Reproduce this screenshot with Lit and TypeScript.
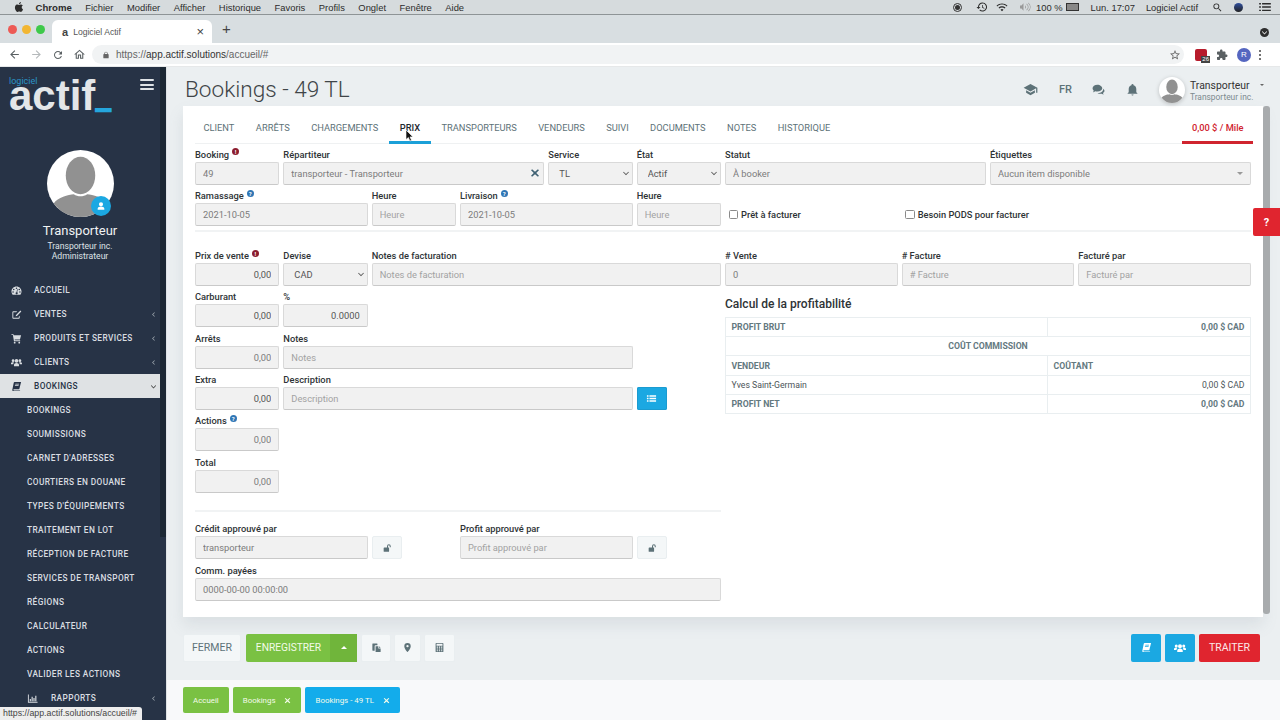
import { LitElement, html, css, svg } from 'lit';
import { customElement } from 'lit/decorators.js';

// all icons share a 24x24 box
const paths: Record<string, string> = {
  apple: 'M18.71 19.5c-.83 1.24-1.71 2.45-3.05 2.47-1.34.03-1.77-.79-3.29-.79-1.53 0-2 .77-3.27.82-1.31.05-2.3-1.32-3.14-2.53C4.25 17 2.94 12.45 4.7 9.39c.87-1.52 2.43-2.48 4.12-2.51 1.28-.02 2.5.87 3.29.87.78 0 2.26-1.07 3.81-.91.65.03 2.47.26 3.64 1.98-.09.06-2.17 1.28-2.15 3.81.03 3.02 2.65 4.03 2.68 4.04-.03.07-.42 1.44-1.38 2.83M13 3.5c.73-.83 1.94-1.46 2.94-1.5.13 1.17-.34 2.35-1.04 3.19-.69.85-1.83 1.51-2.95 1.42-.15-1.15.41-2.35 1.05-3.11z',
  back: 'M20 11H7.83l5.59-5.59L12 4l-8 8 8 8 1.41-1.41L7.83 13H20v-2z',
  forward: 'M12 4l-1.41 1.41L16.17 11H4v2h12.17l-5.58 5.59L12 20l8-8z',
  reload: 'M17.65 6.35C16.2 4.9 14.21 4 12 4c-4.42 0-7.99 3.58-7.99 8s3.57 8 7.99 8c3.73 0 6.84-2.55 7.73-6h-2.08c-.82 2.33-3.04 4-5.65 4-3.31 0-6-2.69-6-6s2.69-6 6-6c1.66 0 3.14.69 4.22 1.78L13 11h7V4l-2.35 2.35z',
  home: 'M12 5.69l5 4.5V18h-2v-6H9v6H7v-7.81l5-4.5M12 3L2 12h3v8h6v-6h2v6h6v-8h3L12 3z',
  star: 'M22 9.24l-7.19-.62L12 2 9.19 8.63 2 9.24l5.46 4.73L5.82 21 12 17.27 18.18 21l-1.63-7.03L22 9.24zM12 15.4l-3.76 2.27 1-4.28-3.32-2.88 4.38-.38L12 6.1l1.71 4.04 4.38.38-3.32 2.88 1 4.28L12 15.4z',
  puzzle: 'M20.5 11H19V7c0-1.1-.9-2-2-2h-4V3.5C13 2.12 11.88 1 10.5 1S8 2.12 8 3.5V5H4c-1.1 0-1.99.9-1.99 2v3.8H3.5c1.49 0 2.7 1.21 2.7 2.7s-1.21 2.7-2.7 2.7H2V20c0 1.1.9 2 2 2h3.8v-1.5c0-1.49 1.21-2.7 2.7-2.7 1.49 0 2.7 1.21 2.7 2.7V22H17c1.1 0 2-.9 2-2v-4h1.5c1.38 0 2.5-1.12 2.5-2.5S21.88 11 20.5 11z',
  lock: 'M18 9h-1V7a5 5 0 0 0-10 0v2H6a2 2 0 0 0-2 2v9a2 2 0 0 0 2 2h12a2 2 0 0 0 2-2v-9a2 2 0 0 0-2-2zM9 7a3 3 0 0 1 6 0v2H9V7z',
  bell: 'M21,19V20H3V19L5,17V11C5,7.9 7.03,5.17 10,4.29C10,4.19 10,4.1 10,4A2,2 0 0,1 12,2A2,2 0 0,1 14,4C14,4.1 14,4.19 14,4.29C16.97,5.17 19,7.9 19,11V17L21,19M14,21A2,2 0 0,1 12,23A2,2 0 0,1 10,21',
  school: 'M12,3L1,9L12,15L21,10.09V17H23V9M5,13.18V17.18L12,21L19,17.18V13.18L12,17L5,13.18Z',
  comments: 'M10 3C5 3 1 6 1 9.7c0 1.7.8 3.2 2.2 4.4-.3 1.2-1 2.2-1.9 3 1.8-.1 3.4-.8 4.6-1.8 1.2.4 2.6.6 4.1.6 5 0 9-3 9-6.2S15 3 10 3zM20.5 10.5c.1.3.1.6.1.9 0 4-4.3 6.9-9.4 6.9h-1c1.4 1.1 3.3 1.7 5.3 1.7.9 0 1.7-.1 2.5-.3 1 .7 2.2 1.2 3.7 1.3-.7-.7-1.2-1.5-1.5-2.5 1.9-1.1 2.8-2.5 2.8-4.1 0-1.5-1-2.9-2.5-3.9z',
  gauge: 'M12 3C5.9 3 1 7.9 1 14c0 2.4.8 4.7 2.2 6.5.2.3.5.5.9.5h15.8c.4 0 .7-.2.9-.5C22.2 18.7 23 16.4 23 14c0-6.100-4.900-11-11-11zM12 5.500a1.700 1.700 0 1 1 0 3.400 1.700 1.700 0 0 1 0-3.400zM6 8a1.700 1.700 0 1 1 0 3.400A1.700 1.700 0 0 1 6 8zM4.500 13.500a1.700 1.700 0 1 1 0 3.400 1.700 1.700 0 0 1 0-3.400zM18 8a1.700 1.700 0 1 1 0 3.400A1.700 1.700 0 0 1 18 8zM19.500 13.500a1.700 1.700 0 1 1 0 3.400 1.700 1.700 0 0 1 0-3.400zM14.800 9.500l-1.300 6.300a2.400 2.400 0 1 1-3.400 1.200c.4-.8 1.200-1.300 2-1.300l1.300-6.500z',
  cart: 'M1 2h4l.8 3H22l-2.500 9H8l.4 2H20v2H6.500L4 4H1zM8 19a2 2 0 1 1 0 4 2 2 0 0 1 0-4zM18 19a2 2 0 1 1 0 4 2 2 0 0 1 0-4z',
  users: 'M12 4.500a4 4 0 1 1 0 8 4 4 0 0 1 0-8zM4.500 5a3 3 0 1 1 0 6 3 3 0 0 1 0-6zM19.500 5a3 3 0 1 1 0 6 3 3 0 0 1 0-6zM6.500 20v-2.500c0-2.500 2-4.500 5.500-4.500s5.500 2 5.500 4.500V20zM0 16v-2c0-1.500 1.500-2.500 4-2.500 1 0 1.700.200 2.400.500A6.500 6.500 0 0 0 5 16zM24 16v-2c0-1.500-1.500-2.500-4-2.500-1 0-1.700.200-2.400.500A6.500 6.500 0 0 1 19 16z',
  edit: 'M19 14.500V19a2 2 0 0 1-2 2H5a2 2 0 0 1-2-2V7a2 2 0 0 1 2-2h8.500l-2 2H5.500a.500.500 0 0 0-.500.500v11a.500.500 0 0 0 .500.500h11a.500.500 0 0 0 .500-.500v-2zM20.500 3.500l2 2-9.500 9.500-3 1 1-3z',
  book: 'M8 2h14l-4 16H6.500c-1 0-1.500.500-1.500 1.200s.500 1.300 1.500 1.300H20l-.400 1.500H5.500C3.500 22 2.500 20.800 2.900 19L6 4c.200-1.200 1-2 2-2zM9.500 6l-.300 1.500h8l.300-1.500zM8.700 9.500l-.300 1.500h8l.300-1.500z',
  chart: 'M2 3h2v16h19v2H2zM6 13h2.500v5H6zM10 8h2.500v10H10zM14 11h2.500v7H14zM18 6h2.500v12H18z',
  list: 'M2 5h3.500v3H2zM7.500 5H22v3H7.500zM2 10.500h3.500v3H2zM7.500 10.500H22v3H7.500zM2 16h3.500v3H2zM7.500 16H22v3H7.500z',
  unlock: 'M15 11H5.500A1.500 1.500 0 0 0 4 12.500v7A1.500 1.500 0 0 0 5.500 21h10a1.500 1.500 0 0 0 1.500-1.500v-7a1.500 1.500 0 0 0-2-1.500zM12 11V7.500a4.500 4.500 0 0 1 9 0V10h-2.500V7.500a2 2 0 0 0-4 0V11z',
  marker: 'M12,2A7,7 0 0,0 5,9C5,14.25 12,22 12,22C12,22 19,14.25 19,9A7,7 0 0,0 12,2M12,11.5A2.5,2.5 0 0,1 9.5,9A2.5,2.5 0 0,1 12,6.5A2.5,2.5 0 0,1 14.5,9A2.5,2.5 0 0,1 12,11.5Z',
  calc: 'M5 2h14a1.500 1.500 0 0 1 1.500 1.500v17A1.500 1.500 0 0 1 19 22H5a1.500 1.500 0 0 1-1.500-1.500v-17A1.500 1.500 0 0 1 5 2zM5.500 4v4h13V4zM6 10v2.500h2.500V10zM10.700 10v2.500h2.600V10zM15.500 10v2.500H18V10zM6 14v2.500h2.500V14zM10.700 14v2.500h2.600V14zM15.500 14v2.500H18V14zM6 18v2h2.500v-2zM10.700 18v2h2.600v-2zM15.500 18v2H18v-2z',
  paste: 'M4 3h9a1 1 0 0 1 1 1v3H9.500A1.500 1.500 0 0 0 8 8.500V19H4a1 1 0 0 1-1-1V4a1 1 0 0 1 1-1zM10 9h6v5h5v7a1 1 0 0 1-1 1h-9.500a.500.500 0 0 1-.500-.500zM17.500 9l3.500 3.500h-3.500z',
  times: 'M5 3l7 6 7-6 2.500 2.500-6.500 6.500 6.500 6.500L19 21l-7-6-7 6-2.500-2.500L9 12 2.500 5.500z',
  user: 'M12 3a5 5 0 1 1 0 10 5 5 0 0 1 0-10zM4 21v-2.500C4 16 6.500 14 9 14h6c2.500 0 5 2 5 4.500V21z',
  chevron: 'M5 8l7 7 7-7 1.800 1.800L12 18.600 3.200 9.800z',
  left: 'M15 4l1.800 1.800L10.600 12l6.200 6.200L15 20l-8-8z',
  search: 'M15.500 14h-.79l-.28-.27A6.470 6.470 0 0 0 16 9.500 6.500 6.500 0 1 0 9.500 16c1.610 0 3.090-.59 4.230-1.570l.27.28v.79l5 4.990L20.490 19l-4.990-5zm-6 0C7.010 14 5 11.990 5 9.500S7.010 5 9.500 5 14 7.010 14 9.500 11.990 14 9.500 14z',
  wifi: 'M1 9.500C7.100 3.400 16.900 3.400 23 9.500l-1.600 1.600C16.200 5.900 7.800 5.900 2.600 11.100zM5 13.500c3.900-3.900 10.100-3.900 14 0l-1.600 1.600c-3-3-7.800-3-10.800 0zM9 17.500a4.200 4.200 0 0 1 6 0l-3 3z',
  volume: 'M2 9v6h3l4 4.500v-15L5 9zM12 8.500a4.500 4.500 0 0 1 0 7v-1.800a2.800 2.800 0 0 0 0-3.400zM15 5a8 8 0 0 1 0 14v-1.800a6.300 6.300 0 0 0 0-10.400zM18.500 3a11 11 0 0 1 0 18v-1.800a9 9 0 0 0 0-14.400z',
  menu: 'M2 5h3v2.500H2zM7 5h15v2.500H7zM2 10.800h3v2.500H2zM7 10.800h15v2.500H7zM2 16.500h3V19H2zM7 16.500h15V19H7z',
  hist: 'M13 3a9 9 0 0 0-9 9H1l3.900 3.900L9 12H6a7 7 0 1 1 2.100 5l-1.400 1.400A9 9 0 1 0 13 3zm-1 5v5l4.300 2.500.7-1.200-3.500-2.100V8z',
};

const icon = (name: string, size = 12) => html`<svg width=${size} height=${size} viewBox="0 0 24 24" fill="currentColor">${svg`<path fill-rule="evenodd" d=${paths[name]}></path>`}</svg>`;

const silhouette = svg`<circle cx="50" cy="50" r="50" fill="#fff"></circle>
  <ellipse cx="50" cy="38" rx="22" ry="28" fill="#919191"></ellipse>
  <path d="M10 80c6-10 22-13 30-14 6 4 14 4 20 0 8 1 24 4 30 14a50 50 0 0 1-80 0z" fill="#919191"></path>`;

const menuItems = [
  { icon: 'gauge', label: 'Accueil' },
  { icon: 'edit', label: 'Ventes', more: true },
  { icon: 'cart', label: 'Produits et services', more: true },
  { icon: 'users', label: 'Clients', more: true },
];

const subItems = ['Bookings', 'Soumissions', "Carnet d'adresses", 'Courtiers en douane', "Types d'équipements", 'Traitement en lot', 'Réception de facture', 'Services de transport', 'Régions', 'Calculateur', 'Actions', 'Valider les actions'];

const tabs = ['Client', 'Arrêts', 'Chargements', 'Prix', 'Transporteurs', 'Vendeurs', 'Suivi', 'Documents', 'Notes', 'Historique'];

const macMenu = ['Fichier', 'Modifier', 'Afficher', 'Historique', 'Favoris', 'Profils', 'Onglet', 'Fenêtre', 'Aide'];

@customElement('app-root')
export class AppRoot extends LitElement {
  static styles = css`
    :host {
      display: block;
      position: relative;
      width: 1280px;
      height: 720px;
      overflow: hidden;
      font-family: 'Roboto', sans-serif;
      color: #333;
      background: #ebeff1;
    }

    svg { display: block; flex: none; }

    /* mac + chrome bars */
    .menubar {
      height: 14px;
      display: flex;
      align-items: center;
      padding: 0 0 0 13px;
      background: #d6dbdd;
      border-bottom: 1px solid #8e9496;
      font: 9.4px 'Liberation Sans', sans-serif;
      color: #2c2c2c;
    }
    .menubar .left { display: flex; align-items: center; gap: 13.5px; }
    .menubar .left b { margin-left: -3px; font-size: 9.6px; }
    .menubar .right { margin-left: auto; display: flex; align-items: center; }
    .record {
      width: 9px; height: 9px; border-radius: 50%; border: 1px solid #333;
      box-sizing: border-box; display: flex; align-items: center; justify-content: center;
      margin-right: 14px;
    }
    .record i { width: 5px; height: 5px; border-radius: 50%; background: #333; }
    .m-hist { margin-right: 8px; }
    .m-wifi { margin-right: 11px; }
    .m-vol { margin-right: 5px; color: #999; }
    .battery {
      width: 11px; height: 6px; margin: 0 12px 0 3px;
      border: 1px solid #333; background: #888;
    }
    .m-app { margin: 0 11px; }
    .m-search { margin: 0 11px 0 3px; }
    .siri {
      width: 9px; height: 9px; border-radius: 50%; margin-right: 15px;
      background: linear-gradient(#2f4f9f, #222);
    }
    .m-list { margin-right: 8px; }

    .tabstrip {
      height: 28px;
      display: flex;
      align-items: flex-end;
      background: #d8dee1;
      position: relative;
    }
    .lights { display: flex; gap: 5px; margin: 0 0 9px 8px; }
    .lights i { width: 9px; height: 9px; border-radius: 50%; }
    .tab {
      width: 160px;
      height: 23px;
      margin-left: 7px;
      box-sizing: border-box;
      display: flex;
      align-items: center;
      padding: 0 8px 0 10px;
      background: #fff;
      border-radius: 6px 6px 0 0;
      font: 8.6px 'Liberation Sans', sans-serif;
      color: #555;
    }
    .tab b { font: 700 11px 'Liberation Sans', sans-serif; color: #444; margin-right: 5px; }
    .tab span { flex: 1; }
    .tab em { font: 13px 'Liberation Sans', sans-serif; color: #444; }
    .newtab { font: 15px 'Liberation Sans', sans-serif; color: #444; margin: 0 0 4px 10px; line-height: 20px; }
    .dropdown {
      margin: 0 11px 6px auto;
      width: 9px; height: 9px; border-radius: 50%;
      background: #2e2e2e; color: #fff;
      display: flex; align-items: center; justify-content: center;
    }

    .toolbar {
      height: 24px;
      display: flex;
      align-items: center;
      background: #fff;
      color: #5a6063;
      box-sizing: border-box;
      border-bottom: 1px solid #e6e8e9;
    }
    .nav { display: flex; align-items: center; gap: 9px; margin: 0 6px 0 8px; }
    .nav .off { color: #b5b9bb; }
    .pill {
      flex: 1;
      height: 19px;
      margin-right: 5px;
      display: flex;
      align-items: center;
      padding: 0 3px 0 10px;
      background: #f1f3f4;
      border-radius: 10px;
      font: 10px 'Liberation Sans', sans-serif;
      color: #666;
    }
    .pill b { color: #333; font-weight: 400; }
    .pill .url { margin-left: 6px; flex: 1; }
    .exts { display: flex; align-items: center; width: 91px; flex: none; }
    .ext-red { width: 12px; height: 12px; margin: 0 0 0 6px; position: relative; background: #b71c2c; border-radius: 2px; }
    .ext-red span {
      position: absolute; right: -3px; bottom: -2px;
      padding: 0 1px; background: #444; color: #fff; font: 6px 'Liberation Sans', sans-serif; line-height: 7px;
    }
    .exts .puzzle { margin-left: 9px; }
    .r-avatar {
      width: 14px; height: 14px; border-radius: 50%; margin-left: 9px;
      display: flex; align-items: center; justify-content: center;
      background: #5566c0; color: #fff; font: 8px 'Liberation Sans', sans-serif;
    }
    .dots { margin-left: 8px; display: flex; flex-direction: column; gap: 2px; }
    .dots i { width: 2px; height: 2px; border-radius: 50%; background: #444; }

    /* page body */
    .page { display: flex; height: 653px; }

    .sidebar {
      flex: none;
      width: 167px;
      box-sizing: border-box;
      background: #273346;
      border-right: 1px solid #dfe3e5;
      position: relative;
      overflow: hidden;
      color: #e7eaec;
    }
    .sb-inner { width: 160px; }
    .sb-thumb { position: absolute; left: 160px; top: 0; width: 6px; height: 470px; background: #1c2834; }
    .logo { height: 83px; position: relative; }
    .logo small { position: absolute; left: 9px; top: 11px; font: 9px/6px 'Roboto', sans-serif; color: #2b94c7; }
    .logo strong {
      position: absolute; left: 9px; top: 17.5px;
      font: 700 42px/22px 'Liberation Sans', sans-serif; color: #e3e6e8; white-space: nowrap;
    }
    .logo strong i {
      font-style: normal; font-size: 29px; color: #25a6dd;
      position: relative; top: -1px;
      text-shadow: 0 -1px 0 #25a6dd, 0 -2px 0 #25a6dd, 0 -3px 0 #25a6dd;
    }
    .burger { position: absolute; left: 140px; top: 12px; width: 14px; display: flex; flex-direction: column; gap: 2.500px; }
    .burger i { height: 2px; background: #dfe3e6; border-radius: 1px; }
    .profile { display: flex; flex-direction: column; align-items: center; }
    .avatar { position: relative; width: 67px; height: 67px; }
    .avatar .badge {
      position: absolute; left: 44px; top: 46px;
      width: 20px; height: 20px; border-radius: 50%;
      background: #1ba8e2; color: #fff;
      display: flex; align-items: center; justify-content: center;
    }
    .profile h2 { margin: 6px 0 3px; font-size: 13px; font-weight: 400; line-height: 15px; color: #f0f2f3; }
    .profile p { margin: 0; font-size: 8.600px; line-height: 10px; color: #dfe3e6; }
    .menu { list-style: none; margin: 17px 0 0; padding: 0; }
    .menu li {
      height: 24px;
      display: flex;
      align-items: center;
      padding: 0 4px 0 11px;
      font-size: 8.300px;
      font-weight: 500;
      letter-spacing: 0.4px;
      text-transform: uppercase;
      color: #d9dde1;
    }
    .menu li .lab { flex: 1; margin-left: 12px; }
    .menu li.open { background: #dfe2e4; color: #273346; }
    .menu li.sub { padding-left: 27px; }
    .menu li .caret { color: #9aa3ab; margin-right: -1px; }
    .menu li.open .caret { color: #333; }
    .menu li.sub.icon-row { padding-left: 27px; }
    .menu li.sub.icon-row .lab { margin-left: 13px; }

    .statusbar {
      position: absolute; left: 0; bottom: 0;
      width: 142px; height: 13px; box-sizing: border-box;
      padding-left: 3px;
      background: #eeeeee;
      border-radius: 0 3px 0 0;
      font: 8.800px/13px 'Liberation Sans', sans-serif;
      color: #444;
      white-space: nowrap;
    }

    .main { flex: 1; min-width: 0; display: flex; flex-direction: column; position: relative; }
    .content { flex: 1; padding: 0 17px 0 16px; }

    .head { height: 39px; display: flex; align-items: center; }
    .head h1 { margin: 0 auto 0 2px; font-size: 22.600px; font-weight: 300; color: #3f4548; line-height: 28px; padding-top: 7px; }
    .head-tools { display: flex; align-items: center; color: #5d7278; padding-top: 6px; margin-right: -1px; }
    .head-tools .fr { margin: 0 20px 0 21px; font-size: 11px; font-weight: 500; }
    .head-tools .bell { margin: 0 20px 0 21px; }
    .me { width: 26px; height: 26px; margin-right: 5px; filter: drop-shadow(0 1px 2px rgba(0,0,0,.2)); }
    .who { width: 70px; padding-top: 2px; }
    .who b { display: block; font-size: 10.400px; font-weight: 400; line-height: 13px; color: #333; }
    .who span { display: block; font-size: 8.400px; line-height: 11px; color: #7c8a8f; }
    .arrow { width: 0; height: 0; border: 2.500px solid transparent; border-top-color: #666; margin: -8px 0 0 0; }

    .card {
      background: #fff;
      padding: 0 12px;
      height: 510.700px;
      box-sizing: border-box;
      box-shadow: 0 8px 14px rgba(120,135,145,.15);
    }
    .tabs {
      height: 37.600px;
      box-sizing: border-box;
      display: flex;
      align-items: stretch;
      border-bottom: 1.500px solid #eff1f2;
      font-size: 9.300px;
      text-transform: uppercase;
      color: #5d7278;
    }
    .tabs span { display: flex; align-items: center; padding: 8px 10.500px 0; margin-right: 0.450px; border-bottom: 3px solid transparent; margin-bottom: -1.500px; box-sizing: content-box; height: 26.600px; }
    .tabs span:first-child { margin-left: -2px; }
    .tabs .active { color: #1e2a30; font-weight: 500; border-bottom-color: #1ba0d8; }
    .tabs .mile { margin-left: auto; margin-right: -2px; padding: 8px 9.500px 0; color: #d0242f; text-transform: none; font-weight: 500; border-bottom-color: #d0242f; }

    .grid12 { display: grid; grid-template-columns: repeat(12, 1fr); column-gap: 4px; }
    .grid6 { display: grid; grid-template-columns: repeat(6, 1fr); column-gap: 4px; grid-column: span 6; align-content: start; }

    .field { min-width: 0; display: flex; flex-direction: column; position: relative; }
    label {
      height: 18.300px;
      display: flex;
      align-items: center;
      gap: 3px;
      font-size: 9.300px;
      font-weight: 500;
      color: #2e3336;
      padding-top: 3px;
      box-sizing: border-box;
    }
    .span1 { grid-column: span 1; }
    .span2 { grid-column: span 2; }
    .span3 { grid-column: span 3; }
    .span4 { grid-column: span 4; }
    .span6 { grid-column: span 6; }

    .dot {
      width: 7px; height: 7px; border-radius: 50%; margin-top: -5px;
      display: inline-flex; align-items: center; justify-content: center;
      color: #fff; font-size: 6px; font-weight: 700; line-height: 7px;
      background: #8c1d2f;
    }
    .dot.info { background: #2f76b5; }

    input, select {
      width: 100%;
      height: 23px;
      box-sizing: border-box;
      margin: 0;
      padding: 0 7px;
      border: 1px solid #d9d9d9;
      border-bottom-color: #c9c9c9;
      border-radius: 2px;
      background: #f1f1f1;
      font: 9.300px 'Roboto', sans-serif;
      color: #7b7b7b;
      outline: none;
      appearance: none;
    }
    input::placeholder { color: #a2a2a2; opacity: 1; }
    input.num { text-align: right; }
    input.dark { color: #555; }
    select { color: #555; padding-left: 10px; }
    .clear { position: absolute; left: 247px; bottom: 6.500px; color: #3f6173; }
    .chev { position: absolute; right: 3px; bottom: 8px; color: #555; }
    .tri { position: absolute; right: 8px; bottom: 10px; border: 3px solid transparent; border-top-color: #999; border-bottom: 0; }

    .checks { height: 23px; align-self: end; display: flex; align-items: center; padding-left: 3.500px; gap: 3px; font-size: 9.300px; font-weight: 500; color: #2e3336; }
    .checks i { width: 7.500px; height: 7.500px; border: 1px solid #8a8a8a; border-radius: 1.500px; background: #fff; }

    hr { border: 0; height: 1.500px; background: #f1f3f4; margin: 0; }
    hr.one { margin: 4px 0 13.200px; }
    hr.two { grid-column: span 6; margin: 17.800px 0 6.200px; }

    .btn-list {
      align-self: end; width: 30px; height: 23px;
      display: flex; align-items: center; justify-content: center;
      background: #1ba8e2; color: #fff; border-radius: 2px;
      box-shadow: inset 0 0 0 1px #1b9bd0;
    }
    .btn-lock {
      align-self: end; width: 30px; height: 23px;
      display: flex; align-items: center; justify-content: center;
      background: #f4f7f8; color: #5d7278; border: 1px solid #e9eef0; box-sizing: border-box; border-radius: 2px;
    }

    .calc h3 { grid-column: span 6; margin: 11.300px 0 5.300px; font-size: 12px; font-weight: 500; line-height: 14px; color: #2e3336; }
    table {
      grid-column: span 6;
      width: 100%;
      border-collapse: collapse;
      table-layout: fixed;
      font-size: 8.700px;
      color: #4c5559;
    }
    td { height: 19.300px; padding: 0 5.500px; border: 1px solid #e9eef0; box-sizing: border-box; white-space: nowrap; }
    td.l { width: 322px; }
    td.h { font-weight: 700; color: #64797f; text-transform: uppercase; }
    td.r { text-align: right; }
    td.c { text-align: center; }

    /* bottom actions */
    .actions { height: 63px; padding-top: 17.300px; box-sizing: border-box; display: flex; gap: 3px; }
    .btn {
      height: 28px;
      display: flex;
      align-items: center;
      justify-content: center;
      box-sizing: border-box;
      border-radius: 2px;
      font-size: 10.500px;
      text-transform: uppercase;
      background: #f4f7f8;
      border: 1px solid #e9eef0;
      color: #5d7278;
    }
    .btn.icon { width: 30px; }
    .btn.icon.narrow { width: 27px; }
    .btn.icon.wide { width: 31px; }
    .btn.close { width: 58px; margin-right: 2px; }
    .btn.save { background: #7ac143; border: 0; color: #f3fbe9; padding: 0; width: 111px; margin-right: 1px; font-size: 10.200px; }
    .btn.save span { flex: 1; text-align: center; padding-left: 1px; }
    .btn.save i { width: 27px; height: 28px; background: #70b53b; display: flex; align-items: center; justify-content: center; }
    .btn.save i::after { content: ''; border: 3px solid transparent; border-bottom-color: #fff; border-top: 0; }
    .spacer { flex: 1; }
    .btn.blue { width: 30px; background: #1ba8e2; border: 0; color: #fff; margin-right: 1px; }
    .btn.red { width: 61px; background: #e0252f; border: 0; color: #fbe9e9; margin-right: 3px; }

    .footer {
      height: 40px; flex: none; box-sizing: border-box;
      padding: 7px 0 0 16px;
      display: flex; gap: 4px;
      background: #f8f9fa;
    }
    .chip {
      height: 26px; display: flex; align-items: center; box-sizing: border-box;
      padding: 0 10px; border-radius: 2px;
      background: #7ac143; color: #f3fbe9; font-size: 7.900px;
    }
    .chip svg { margin-left: 9px; }
    .chip.blue { background: #13aceb; }

    .thumb { position: absolute; left: 1096px; top: 39px; width: 7px; height: 508px; border-radius: 3px; background: #a8abad; }
    .help {
      position: absolute; right: 0; top: 141px; width: 27px; height: 28px;
      display: flex; align-items: center; justify-content: center;
      background: #e0252f; color: #fff; border-radius: 2px 0 0 2px;
      font-size: 11px; font-weight: 700;
    }
    .cursor { position: absolute; left: 238px; top: 62px; }
  `;

  field(name: string, value: string, span: string, opts: { placeholder?: boolean; num?: boolean; dark?: boolean; dot?: string } = {}) {
    return html`<div class="field ${span}">
      <label>${name}${opts.dot ? html`<span class="dot ${opts.dot === '?' ? 'info' : ''}">${opts.dot}</span>` : ''}</label>
      <input class="${opts.num ? 'num' : ''} ${opts.dark ? 'dark' : ''}" readonly .value=${opts.placeholder ? '' : value} placeholder=${value} />
    </div>`;
  }

  selectField(name: string, value: string, span: string) {
    return html`<div class="field ${span}">
      <label>${name}</label>
      <select><option>${value}</option></select>
      <span class="chev">${icon('chevron', 8)}</span>
    </div>`;
  }

  renderBars() {
    return html`
      <div class="menubar">
        <div class="left">
          ${icon('apple', 12)}
          <b>Chrome</b>
          ${macMenu.map((m) => html`<span>${m}</span>`)}
        </div>
        <div class="right">
          <span class="record"><i></i></span>
          <span class="m-hist">${icon('hist', 12)}</span>
          <span class="m-wifi">${icon('wifi', 12)}</span>
          <span class="m-vol">${icon('volume', 12)}</span>
          <span>100 %</span>
          <span class="battery"></span>
          <span>Lun. 17:07</span>
          <span class="m-app">Logiciel Actif</span>
          <span class="m-search">${icon('search', 11)}</span>
          <span class="siri"></span>
          <span class="m-list">${icon('menu', 14)}</span>
        </div>
      </div>
      <div class="tabstrip">
        <div class="lights">
          <i style="background:#ed5a55"></i><i style="background:#f2b632"></i><i style="background:#3ec94a"></i>
        </div>
        <div class="tab"><b>a</b><span>Logiciel Actif</span><em>×</em></div>
        <div class="newtab">+</div>
        <div class="dropdown">${icon('chevron', 7)}</div>
      </div>
      <div class="toolbar">
        <div class="nav">
          ${icon('back', 13)}
          <span class="off">${icon('forward', 13)}</span>
          ${icon('reload', 12)}
          ${icon('home', 13)}
        </div>
        <div class="pill">
          ${icon('lock', 8)}
          <span class="url">https://<b>app.actif.solutions</b>/accueil/#</span>
          ${icon('star', 12)}
        </div>
        <div class="exts">
          <div class="ext-red"><span>26</span></div>
          <span class="puzzle">${icon('puzzle', 12)}</span>
          <div class="r-avatar">R</div>
          <div class="dots"><i></i><i></i><i></i></div>
        </div>
      </div>
    `;
  }

  renderSidebar() {
    return html`
      <aside class="sidebar">
        <div class="sb-thumb"></div>
        <div class="sb-inner">
          <div class="logo">
            <strong>actif<i>_</i></strong>
            <small>logiciel</small>
            <div class="burger"><i></i><i></i><i></i></div>
          </div>
          <div class="profile">
            <div class="avatar">
              <svg width="67" height="67" viewBox="0 0 100 100">${silhouette}</svg>
              <span class="badge">${icon('user', 10)}</span>
            </div>
            <h2>Transporteur</h2>
            <p>Transporteur inc.</p>
            <p>Administrateur</p>
          </div>
          <ul class="menu">
            ${menuItems.map((m) => html`<li>${icon(m.icon, 11)}<span class="lab">${m.label}</span>${m.more ? html`<span class="caret">${icon('left', 7)}</span>` : ''}</li>`)}
            <li class="open">${icon('book', 11)}<span class="lab">Bookings</span><span class="caret">${icon('chevron', 7)}</span></li>
            ${subItems.map((s) => html`<li class="sub">${s}</li>`)}
            <li class="sub icon-row">${icon('chart', 11)}<span class="lab">Rapports</span><span class="caret">${icon('left', 7)}</span></li>
          </ul>
        </div>
        <div class="statusbar">https://app.actif.solutions/accueil/#</div>
      </aside>
    `;
  }

  renderForm() {
    return html`
      <div class="grid12">
        ${this.field('Booking', '49', 'span1', { dot: '!' })}
        <div class="field span3">
          <label>Répartiteur</label>
          <input readonly .value=${'transporteur - Transporteur'} />
          <span class="clear">${icon('times', 10)}</span>
        </div>
        ${this.selectField('Service', 'TL', 'span1')}
        ${this.selectField('État', 'Actif', 'span1')}
        ${this.field('Statut', 'À booker', 'span3')}
        <div class="field span3">
          <label>Étiquettes</label>
          <input readonly .value=${'Aucun item disponible'} />
          <span class="tri"></span>
        </div>

        ${this.field('Ramassage', '2021-10-05', 'span2', { dot: '?' })}
        ${this.field('Heure', 'Heure', 'span1', { placeholder: true })}
        ${this.field('Livraison', '2021-10-05', 'span2', { dot: '?' })}
        ${this.field('Heure', 'Heure', 'span1', { placeholder: true })}
        <div class="checks span2"><i></i>Prêt à facturer</div>
        <div class="checks span4"><i></i>Besoin PODS pour facturer</div>
      </div>

      <hr class="one" />

      <div class="grid12">
        <div class="grid6">
          ${this.field('Prix de vente', '0,00', 'span1', { num: true, dark: true, dot: '!' })}
          ${this.selectField('Devise', 'CAD', 'span1')}
          ${this.field('Notes de facturation', 'Notes de facturation', 'span4', { placeholder: true })}

          ${this.field('Carburant', '0,00', 'span1', { num: true, dark: true })}
          ${this.field('%', '0.0000', 'span1', { num: true, dark: true })}
          <div class="span4"></div>

          ${this.field('Arrêts', '0,00', 'span1', { num: true })}
          ${this.field('Notes', 'Notes', 'span4', { placeholder: true })}
          <div class="span1"></div>

          ${this.field('Extra', '0,00', 'span1', { num: true, dark: true })}
          ${this.field('Description', 'Description', 'span4', { placeholder: true })}
          <div class="btn-list">${icon('list', 11)}</div>

          ${this.field('Actions', '0,00', 'span1', { num: true, dot: '?' })}
          <div class="span4"></div><div class="span1"></div>

          ${this.field('Total', '0,00', 'span1', { num: true })}
          <div class="span4"></div><div class="span1"></div>

          <hr class="two" />

          ${this.field('Crédit approuvé par', 'transporteur', 'span2')}
          <div class="btn-lock">${icon('unlock', 10)}</div>
          ${this.field('Profit approuvé par', 'Profit approuvé par', 'span2', { placeholder: true })}
          <div class="btn-lock">${icon('unlock', 10)}</div>

          ${this.field('Comm. payées', '0000-00-00 00:00:00', 'span6')}
        </div>

        <div class="grid6 calc">
          ${this.field('# Vente', '0', 'span2')}
          ${this.field('# Facture', '# Facture', 'span2', { placeholder: true })}
          ${this.field('Facturé par', 'Facturé par', 'span2', { placeholder: true })}
          <h3>Calcul de la profitabilité</h3>
          <table>
            <tr><td class="l h">Profit brut</td><td class="r h">0,00 $ CAD</td></tr>
            <tr><td class="c h" colspan="2">Coût commission</td></tr>
            <tr><td class="l h">Vendeur</td><td class="h">Coûtant</td></tr>
            <tr><td class="l">Yves Saint-Germain</td><td class="r">0,00 $ CAD</td></tr>
            <tr><td class="l h">Profit net</td><td class="r h">0,00 $ CAD</td></tr>
          </table>
        </div>
      </div>
    `;
  }

  renderMain() {
    return html`
      <main class="main">
        <div class="content">
          <header class="head">
            <h1>Bookings - 49 TL</h1>
            <div class="head-tools">
              ${icon('school', 15)}
              <span class="fr">FR</span>
              ${icon('comments', 13)}
              <span class="bell">${icon('bell', 13)}</span>
              <svg class="me" viewBox="0 0 100 100">${silhouette}</svg>
              <div class="who"><b>Transporteur</b><span>Transporteur inc.</span></div>
              <span class="arrow"></span>
            </div>
          </header>
          <section class="card">
            <nav class="tabs">
              ${tabs.map((t) => html`<span class=${t === 'Prix' ? 'active' : ''}>${t}</span>`)}
              <span class="mile">0,00 $ / Mile</span>
            </nav>
            ${this.renderForm()}
          </section>
          <div class="actions">
            <div class="btn close">Fermer</div>
            <div class="btn save"><span>Enregistrer</span><i></i></div>
            <div class="btn icon">${icon('paste', 11)}</div>
            <div class="btn icon narrow">${icon('marker', 11)}</div>
            <div class="btn icon wide">${icon('calc', 11)}</div>
            <div class="spacer"></div>
            <div class="btn blue">${icon('book', 11)}</div>
            <div class="btn blue">${icon('users', 12)}</div>
            <div class="btn red">Traiter</div>
          </div>
        </div>
        <div class="footer">
          <div class="chip">Accueil</div>
          <div class="chip">Bookings${icon('times', 7)}</div>
          <div class="chip blue">Bookings - 49 TL${icon('times', 7)}</div>
        </div>
        <div class="thumb"></div>
        <div class="help">?</div>
        <svg class="cursor" width="9" height="13" viewBox="0 0 9 13"><path d="M1 1v9.500l2.400-2 1.500 3.500 1.600-.7-1.500-3.400H8z" fill="#111" stroke="#fff" stroke-width=".6"></path></svg>
      </main>
    `;
  }

  render() {
    return html`
      ${this.renderBars()}
      <div class="page">
        ${this.renderSidebar()}
        ${this.renderMain()}
      </div>
    `;
  }
}
